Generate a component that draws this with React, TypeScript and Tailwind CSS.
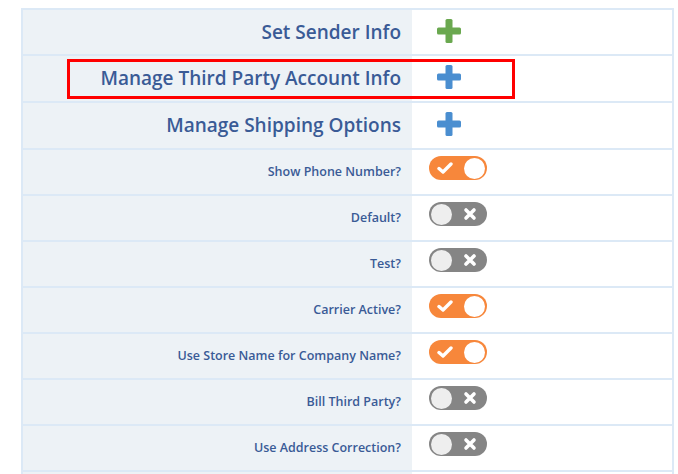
import React from "react";

type Row =
  | { kind: "header"; label: string; color: "green" | "blue"; h: string }
  | { kind: "toggle"; label: string; on: boolean };

const rows: Row[] = [
  { kind: "header", label: "Set Sender Info", color: "green", h: "h-[46px]" },
  { kind: "header", label: "Manage Third Party Account Info", color: "blue", h: "h-[47px]" },
  { kind: "header", label: "Manage Shipping Options", color: "blue", h: "h-[47px]" },
  { kind: "toggle", label: "Show Phone Number?", on: true },
  { kind: "toggle", label: "Default?", on: false },
  { kind: "toggle", label: "Test?", on: false },
  { kind: "toggle", label: "Carrier Active?", on: true },
  { kind: "toggle", label: "Use Store Name for Company Name?", on: true },
  { kind: "toggle", label: "Bill Third Party?", on: false },
  { kind: "toggle", label: "Use Address Correction?", on: false },
  { kind: "toggle", label: "", on: false },
];

function Plus({ color }: { color: "green" | "blue" }) {
  const c = color === "green" ? "#6aa84f" : "#4a8ed0";
  return (
    <svg width="24" height="24" viewBox="0 0 24 24">
      <rect x="8.5" y="0" width="7" height="24" rx="1.5" fill={c} />
      <rect x="0" y="8.5" width="24" height="7" rx="1.5" fill={c} />
    </svg>
  );
}

function Toggle({ on }: { on: boolean }) {
  if (on) {
    return (
      <div className="flex h-[24px] w-[58px] items-center justify-between rounded-full bg-[#f7873b] pl-[8px] pr-[2px]">
        <svg width="16" height="12" viewBox="0 0 16 12">
          <path d="M2 6.5 L6 10 L14 2" stroke="#fff" strokeWidth="3.4" fill="none" strokeLinecap="round" strokeLinejoin="round" />
        </svg>
        <div className="h-[21px] w-[21px] rounded-full bg-white" />
      </div>
    );
  }
  return (
    <div className="flex h-[24px] w-[58px] items-center justify-between rounded-full bg-[#858585] pl-[2px] pr-[10px]">
      <div className="h-[21px] w-[21px] rounded-full bg-[#eeeeee]" />
      <svg width="14" height="14" viewBox="0 0 14 14">
        <path d="M3 3 L11 11 M11 3 L3 11" stroke="#fff" strokeWidth="3.6" fill="none" strokeLinecap="round" />
      </svg>
    </div>
  );
}

export default function App() {
  return (
    <div
      className="relative h-[474px] overflow-hidden bg-white pl-[21px] pt-[8px]"
      style={{ fontFamily: '"Open Sans", "Noto Sans", sans-serif' }}
    >
      <div className="flex w-[653px] flex-col border-x-2 border-t-2 border-[#dce9f6]">
        {rows.map((r, i) => (
          <div
            key={i}
            className={`flex shrink-0 border-b-2 border-[#dce9f6] ${r.kind === "header" ? r.h : "h-[46px]"}`}
          >
            <div className="flex w-[389px] items-center justify-end bg-[#edf2f6] pr-[11px]">
              {r.kind === "header" ? (
                <span className="text-[19px] font-semibold leading-none text-[#3a5b96]">{r.label}</span>
              ) : (
                <span className="text-[12.5px] font-semibold leading-none text-[#3a5b96]">{r.label}</span>
              )}
            </div>
            <div className="flex flex-1 bg-white">
              {r.kind === "header" ? (
                <div className="flex items-center pb-[3px] pl-[25px]">
                  <Plus color={r.color} />
                </div>
              ) : (
                <div className="pl-[17px] pt-[6px]">
                  <Toggle on={r.on} />
                </div>
              )}
            </div>
          </div>
        ))}
      </div>
      <div className="pointer-events-none absolute left-[67px] top-[59px] h-[40px] w-[448px] border-[3px] border-[#ff0000]" />
    </div>
  );
}
